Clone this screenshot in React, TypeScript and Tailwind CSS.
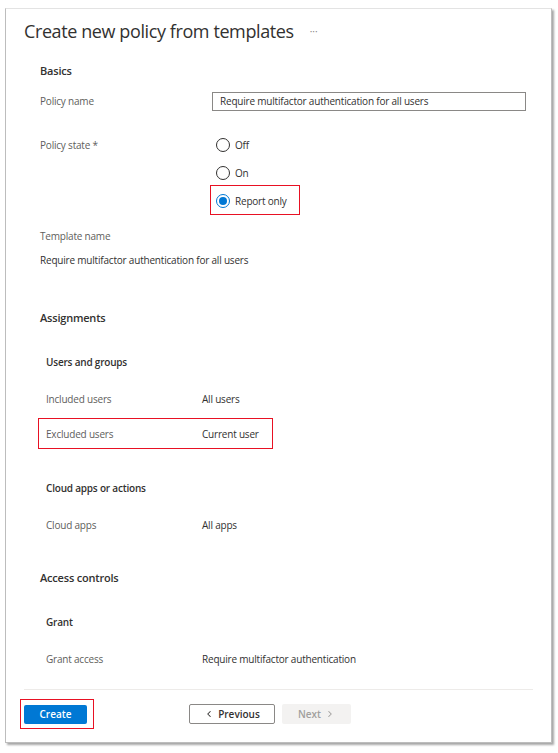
import { ChevronLeft, ChevronRight } from "lucide-react";

const font = { fontFamily: '"Open Sans", "Noto Sans", sans-serif' };

function Radio({ label, checked }: { label: string; checked?: boolean }) {
  return (
    <div className="flex h-[20px] items-center">
      {checked ? (
        <span className="flex h-[14px] w-[14px] items-center justify-center rounded-full border border-[#0078d4] bg-white">
          <span className="h-[8px] w-[8px] rounded-full bg-[#0078d4]" />
        </span>
      ) : (
        <span className="h-[14px] w-[14px] rounded-full border border-[#323130] bg-white" />
      )}
      <span className="ml-[5px] text-[10px] tracking-[-0.2px] text-[#323130]">{label}</span>
    </div>
  );
}

function Row({ label, value, className = "" }: { label: string; value: string; className?: string }) {
  return (
    <div className={`flex h-[20px] items-center pl-[6px] text-[10px] tracking-[-0.2px] ${className}`}>
      <span className="w-[156px] text-[#605e5c]">{label}</span>
      <span className="text-[#323130]">{value}</span>
    </div>
  );
}

function Heading({ children, sub, className = "" }: { children: string; sub?: boolean; className?: string }) {
  return (
    <div
      className={`flex h-[20px] items-center font-semibold tracking-[-0.2px] text-[#323130] ${sub ? "pl-[6px] text-[10px]" : "text-[11px]"} ${className}`}
    >
      {children}
    </div>
  );
}

export default function App() {
  return (
    <div className="min-h-[753px] w-[558px] bg-white pl-[5px] pt-[8px]" style={font}>
      <div className="flex h-[735px] w-[547px] flex-col border border-[#bdbdbd] border-t-[#e3e3e3] bg-white pt-[8px] shadow-[2px_2px_2px_rgba(0,0,0,0.35)]">
        {/* title */}
        <div className="flex h-[28px] items-center pl-[18px]">
          <h1 className="text-[18px] tracking-[-0.4px] text-[#323130]">Create new policy from templates</h1>
          <span className="ml-[16px] text-[10px] text-[#8a8886]">···</span>
        </div>

        <div className="pl-[34px]">
          <Heading className="mt-[16px]">Basics</Heading>

          <div className="mt-[10px] flex h-[20px] items-center text-[10px] tracking-[-0.2px]">
            <span className="w-[172px] text-[#605e5c]">Policy name</span>
            <div className="flex h-[19px] w-[314px] items-center border border-[#8a8886] px-[7px] text-[#323130]">
              Require multifactor authentication for all users
            </div>
          </div>

          <div className="mt-[24px] flex text-[10px] tracking-[-0.2px]">
            <span className="flex h-[20px] w-[176px] items-center text-[#605e5c]">Policy state *</span>
            <div className="flex flex-col gap-[8px]">
              <Radio label="Off" />
              <Radio label="On" />
              <div className="relative">
                <Radio label="Report only" checked />
                <span className="absolute -left-[6px] -top-[6px] h-[30px] w-[90px] border-[1.5px] border-[#e81123]" />
              </div>
            </div>
          </div>

          <div className="mt-[15px] flex h-[20px] items-center text-[10px] tracking-[-0.2px] text-[#605e5c]">Template name</div>
          <div className="mt-[4px] flex h-[20px] items-center text-[10px] tracking-[-0.2px] text-[#323130]">
            Require multifactor authentication for all users
          </div>

          <Heading className="mt-[38px]">Assignments</Heading>
          <Heading sub className="mt-[24px]">Users and groups</Heading>
          <Row label="Included users" value="All users" className="mt-[17px]" />
          <div className="relative mt-[15px]">
            <Row label="Excluded users" value="Current user" />
            <span className="absolute -left-[2px] -top-[6px] h-[31px] w-[235px] border-[1.5px] border-[#e81123]" />
          </div>

          <Heading sub className="mt-[34px]">Cloud apps or actions</Heading>
          <Row label="Cloud apps" value="All apps" className="mt-[17px]" />

          <Heading className="mt-[33px]">Access controls</Heading>
          <Heading sub className="mt-[24px]">Grant</Heading>
          <Row label="Grant access" value="Require multifactor authentication" className="mt-[17px]" />
        </div>

        <div className="mx-[18px] mt-[20px] h-px bg-[#edebe9]" />

        <div className="mt-[14px] flex items-start pl-[18px]">
          <div className="relative mt-[1px]">
            <button className="flex h-[19px] w-[63px] items-center justify-center rounded-[2px] bg-[#0078d4] text-[10px] font-semibold text-white">
              Create
            </button>
            <span className="absolute -left-[4px] -top-[6px] h-[30px] w-[74px] border-[1.5px] border-[#e81123]" />
          </div>
          <button className="ml-[102px] flex h-[20px] w-[86px] items-center justify-center gap-[4px] rounded-[2px] border border-[#8a8886] bg-white text-[10px] font-semibold text-[#323130]">
            <ChevronLeft size={10} strokeWidth={2.5} />
            Previous
          </button>
          <button className="ml-[7px] flex h-[20px] w-[69px] items-center justify-center gap-[4px] rounded-[2px] bg-[#f3f2f1] text-[10px] font-semibold text-[#a19f9d]">
            Next
            <ChevronRight size={10} strokeWidth={2.5} />
          </button>
        </div>
      </div>
    </div>
  );
}
